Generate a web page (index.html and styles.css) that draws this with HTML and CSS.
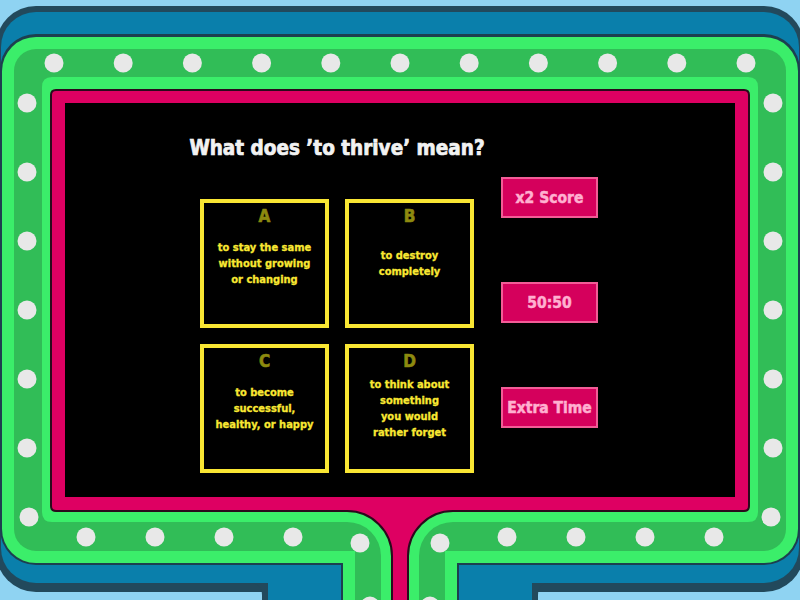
FILE: index.html
```html
<!DOCTYPE html>
<html>
<head>
<meta charset="utf-8">
<link rel="stylesheet" href="styles.css">
</head>
<body>
<div class="stage">
  <svg class="frame" width="800" height="600" viewBox="0 0 800 600" xmlns="http://www.w3.org/2000/svg">
    <rect x="-4" y="6" width="808" height="586" rx="40" fill="#22495c"/>
    <rect x="1" y="12" width="798" height="571" rx="35" fill="#0a7fab"/>
    <path fill="#22495c" d="M250 583 Q262 583 262 595 V602 H538 V595 Q538 583 550 583 Z"/>
    <rect x="268" y="578" width="264" height="25" fill="#0a7fab"/>
    <rect x="0" y="34" width="800" height="531" rx="36" fill="#1d3f4f"/>
    <rect x="341" y="540" width="118" height="70" fill="#1d3f4f"/>
    <rect x="2" y="37" width="796" height="526" rx="34" fill="#3bee6a"/>
    <rect x="343" y="540" width="114" height="70" fill="#3bee6a"/>
    <rect x="14" y="49" width="772" height="502" rx="22" fill="#31bd57"/>
    <rect x="355" y="530" width="90" height="80" fill="#31bd57"/>
    <g fill="#e8e8e8">
      <circle cx="54" cy="63" r="9.5"/><circle cx="123.2" cy="63" r="9.5"/><circle cx="192.4" cy="63" r="9.5"/>
      <circle cx="261.6" cy="63" r="9.5"/><circle cx="330.8" cy="63" r="9.5"/><circle cx="400" cy="63" r="9.5"/>
      <circle cx="469.2" cy="63" r="9.5"/><circle cx="538.4" cy="63" r="9.5"/><circle cx="607.6" cy="63" r="9.5"/>
      <circle cx="676.8" cy="63" r="9.5"/><circle cx="746" cy="63" r="9.5"/>
      <circle cx="27" cy="103" r="9.5"/><circle cx="27" cy="172" r="9.5"/><circle cx="27" cy="241" r="9.5"/>
      <circle cx="27" cy="310" r="9.5"/><circle cx="27" cy="379" r="9.5"/><circle cx="27" cy="448" r="9.5"/>
      <circle cx="29" cy="517" r="9.5"/>
      <circle cx="773" cy="103" r="9.5"/><circle cx="773" cy="172" r="9.5"/><circle cx="773" cy="241" r="9.5"/>
      <circle cx="773" cy="310" r="9.5"/><circle cx="773" cy="379" r="9.5"/><circle cx="773" cy="448" r="9.5"/>
      <circle cx="771" cy="517" r="9.5"/>
      <circle cx="86" cy="537" r="9.5"/><circle cx="155" cy="537" r="9.5"/><circle cx="224" cy="537" r="9.5"/>
      <circle cx="293" cy="537" r="9.5"/><circle cx="360" cy="543" r="9.5"/>
      <circle cx="440" cy="543" r="9.5"/><circle cx="507" cy="537" r="9.5"/><circle cx="576" cy="537" r="9.5"/>
      <circle cx="645" cy="537" r="9.5"/><circle cx="714" cy="537" r="9.5"/>
      <circle cx="370" cy="606" r="9.5"/><circle cx="430" cy="606" r="9.5"/>
    </g>
    <path fill="#3bee6a" d="M52 77 H748 Q758 77 758 87 V512 Q758 522 748 522 H453 A34 34 0 0 0 419 556 V610 H381 V556 A34 34 0 0 0 347 522 H52 Q42 522 42 512 V87 Q42 77 52 77 Z"/>
    <path fill="#de0062" stroke="#2a0a1c" stroke-width="2" d="M56 90 H744 Q749 90 749 95 V506 Q749 511 744 511 H453 A45 45 0 0 0 408 556 V610 H392 V556 A45 45 0 0 0 347 511 H56 Q51 511 51 506 V95 Q51 90 56 90 Z"/>
  </svg>
  <div class="screen">
    <div class="quiz">
      <h1 class="question">What does ’to thrive’ mean?</h1>
      <div class="answers">
        <div class="answer"><span class="letter">A</span><span class="text">to stay the same<br>without growing<br>or changing</span></div>
        <div class="answer"><span class="letter">B</span><span class="text">to destroy<br>completely</span></div>
        <div class="answer"><span class="letter">C</span><span class="text">to become<br>successful,<br>healthy, or happy</span></div>
        <div class="answer"><span class="letter">D</span><span class="text">to think about<br>something<br>you would<br>rather forget</span></div>
      </div>
    </div>
    <div class="powers">
      <div class="power">x2 Score</div>
      <div class="power">50:50</div>
      <div class="power">Extra Time</div>
    </div>
  </div>
</div>
</body>
</html>
```

FILE: styles.css
```css
body {
  margin: 0;
  background: #8fd3f2;
}

.stage {
  position: relative;
  width: 800px;
  height: 600px;
  overflow: hidden;
  background: #8fd3f2;
}

.frame {
  position: absolute;
  left: 0;
  top: 0;
}

.screen {
  position: relative;
  margin: 103px 0 0 65px;
  width: 670px;
  height: 394px;
  background: #000;
  display: flex;
  font-family: "DejaVu Sans Condensed", "DejaVu Sans", sans-serif;
  font-stretch: condensed;
}

.quiz {
  margin-left: 135px;
  width: 274px;
  display: flex;
  flex-direction: column;
}

.question {
  margin: 32px -40px 0;
  height: 26px;
  line-height: 26px;
  font-size: 20.5px;
  font-weight: 700;
  color: #f2f2f2;
  -webkit-text-stroke: 0.7px #f2f2f2;
  text-align: center;
  white-space: nowrap;
}

.answers {
  margin-top: 38px;
  display: grid;
  grid-template-columns: 129px 129px;
  grid-auto-rows: 129px;
  gap: 16px;
}

.answer {
  box-sizing: border-box;
  border: 4px solid #f9e633;
  display: grid;
  justify-items: center;
}

.letter,
.text {
  grid-area: 1 / 1;
}

.letter {
  align-self: start;
  margin-top: 3px;
  line-height: 20px;
  font-size: 17px;
  font-weight: 700;
  color: #8d8a0f;
  -webkit-text-stroke: 0.6px #8d8a0f;
}

.text {
  align-self: center;
  text-align: center;
  font-size: 11px;
  line-height: 16px;
  font-weight: 700;
  color: #f9e833;
  -webkit-text-stroke: 0.3px #f9e833;
}

.powers {
  margin-left: 27px;
  padding-top: 74px;
  display: flex;
  flex-direction: column;
  gap: 64px;
}

.power {
  box-sizing: border-box;
  width: 97px;
  height: 41px;
  border: 2px solid #f25c97;
  background: #d5005c;
  color: #ffb0d0;
  -webkit-text-stroke: 0.5px #ffb0d0;
  font-size: 15.5px;
  font-weight: 700;
  display: flex;
  align-items: center;
  justify-content: center;
}
```
